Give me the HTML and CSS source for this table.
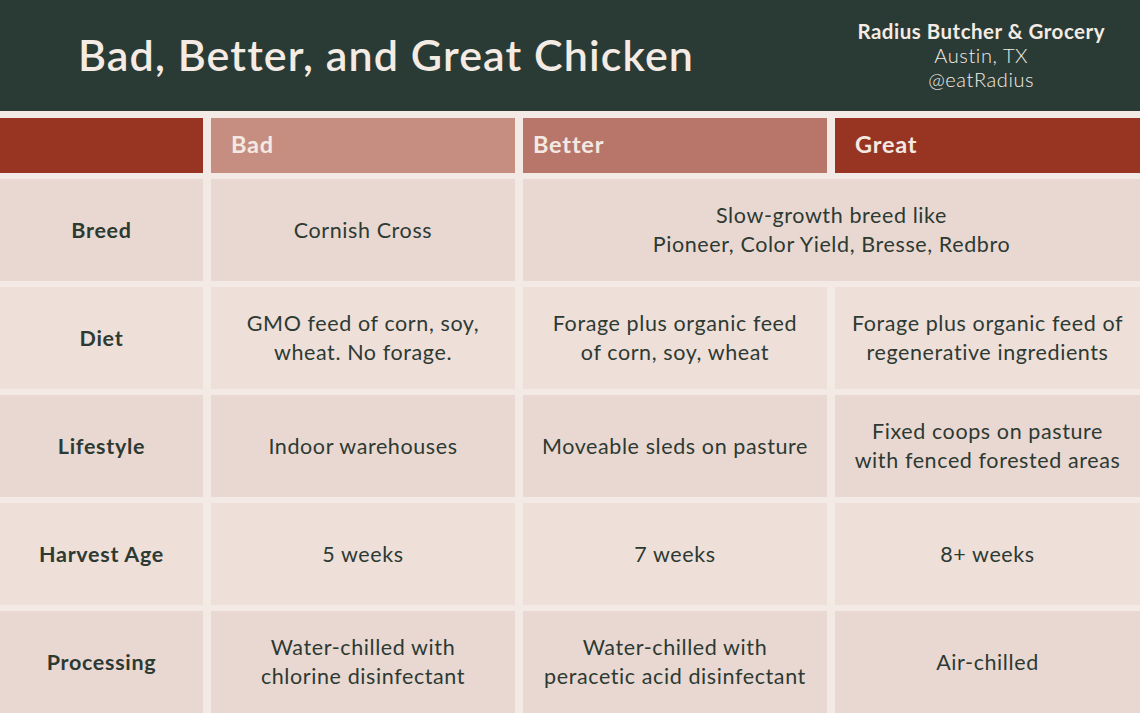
FILE: index.html
```html
<!DOCTYPE html>
<html>
<head>
<meta charset="utf-8">
<link rel="stylesheet" href="styles.css">
</head>
<body>
<header class="top">
  <h1 class="title">Bad, Better, and Great Chicken</h1>
  <div class="brand">
    <div class="brand-name">Radius Butcher &amp; Grocery</div>
    <div class="brand-line">Austin, TX</div>
    <div class="brand-line">@eatRadius</div>
  </div>
</header>
<main class="table">
  <div class="head head-blank"></div>
  <div class="head head-bad">Bad</div>
  <div class="head head-better">Better</div>
  <div class="head head-great">Great</div>

  <div class="cell label dark">Breed</div>
  <div class="cell dark">Cornish Cross</div>
  <div class="cell dark span2">Slow-growth breed like<br>Pioneer, Color Yield, Bresse, Redbro</div>

  <div class="cell label light">Diet</div>
  <div class="cell light">GMO feed of corn, soy,<br>wheat. No forage.</div>
  <div class="cell light">Forage plus organic feed<br>of corn, soy, wheat</div>
  <div class="cell light">Forage plus organic feed of<br>regenerative ingredients</div>

  <div class="cell label dark">Lifestyle</div>
  <div class="cell dark">Indoor warehouses</div>
  <div class="cell dark">Moveable sleds on pasture</div>
  <div class="cell dark">Fixed coops on pasture<br>with fenced forested areas</div>

  <div class="cell label light">Harvest Age</div>
  <div class="cell light">5 weeks</div>
  <div class="cell light">7 weeks</div>
  <div class="cell light">8+ weeks</div>

  <div class="cell label dark">Processing</div>
  <div class="cell dark">Water-chilled with<br>chlorine disinfectant</div>
  <div class="cell dark">Water-chilled with<br>peracetic acid disinfectant</div>
  <div class="cell dark">Air-chilled</div>
</main>
</body>
</html>
```
FILE: styles.css
```css
* { box-sizing: border-box; }
html, body { margin: 0; padding: 0; }
body {
  width: 1140px;
  height: 713px;
  overflow: hidden;
  background: #f4eae5;
  font-family: Lato, "Open Sans", sans-serif;
  color: #2d3a33;
}
.top {
  height: 111px;
  background: #2a3b35;
  display: flex;
  align-items: center;
  justify-content: space-between;
  padding: 0 35px 0 78px;
  color: #f4ebe4;
}
.title {
  margin: 0;
  font-size: 43px;
  font-weight: 600;
  letter-spacing: 1.1px;
  padding-bottom: 2px;
}
.brand {
  text-align: center;
  line-height: 24px;
  padding-bottom: 2px;
}
.brand-name {
  font-size: 20.5px;
  font-weight: 700;
  letter-spacing: 0.5px;
}
.brand-line {
  font-size: 20px;
  font-weight: 300;
  letter-spacing: 0.6px;
}
.table {
  display: grid;
  grid-template-columns: 203px 304px 304px 1fr;
  grid-template-rows: 55px repeat(5, 102px);
  column-gap: 8px;
  row-gap: 6px;
  padding-top: 7px;
}
.head {
  display: flex;
  align-items: center;
  padding-left: 20px;
  padding-bottom: 3px;
  font-size: 23.5px;
  font-weight: 700;
  color: #f4e9e2;
  letter-spacing: 0.8px;
}
.head-blank { background: #983522; }
.head-bad { background: #c68e81; }
.head-better { background: #b8766a; padding-left: 10px; }
.head-great { background: #983522; }
.cell {
  display: flex;
  align-items: center;
  justify-content: center;
  text-align: center;
  font-size: 21.5px;
  line-height: 29px;
  letter-spacing: 0.6px;
}
.label { font-weight: 700; letter-spacing: 0.7px; }
.dark { background: #e9d8d1; }
.light { background: #eedfd9; }
.span2 { grid-column: span 2; }
```
